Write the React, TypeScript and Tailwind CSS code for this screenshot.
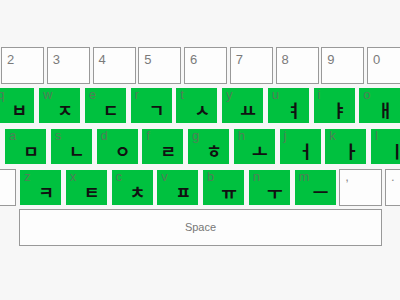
const numberRow = ["1", "2", "3", "4", "5", "6", "7", "8", "9", "0", "-", "="];

const topRow = [
  ["q", "ㅂ"],
  ["w", "ㅈ"],
  ["e", "ㄷ"],
  ["r", "ㄱ"],
  ["t", "ㅅ"],
  ["y", "ㅛ"],
  ["u", "ㅕ"],
  ["i", "ㅑ"],
  ["o", "ㅐ"],
  ["p", "ㅔ"],
];

const homeRow = [
  ["a", "ㅁ"],
  ["s", "ㄴ"],
  ["d", "ㅇ"],
  ["f", "ㄹ"],
  ["g", "ㅎ"],
  ["h", "ㅗ"],
  ["j", "ㅓ"],
  ["k", "ㅏ"],
  ["l", "ㅣ"],
];

const bottomRow = [
  ["z", "ㅋ"],
  ["x", "ㅌ"],
  ["c", "ㅊ"],
  ["v", "ㅍ"],
  ["b", "ㅠ"],
  ["n", "ㅜ"],
  ["m", "ㅡ"],
];

function Cell({ children }: { children: React.ReactNode }) {
  return (
    <div className="w-[45.75px] shrink-0 flex justify-center items-center">
      {children}
    </div>
  );
}

function NumberKey({ label }: { label: string }) {
  return (
    <Cell>
      <div className="w-[43px] h-[37px] border border-[#999] bg-[#fdfdfd] pl-[5px] pt-[5px] text-[13px] leading-none text-[#7a7a7a]">
        {label}
      </div>
    </Cell>
  );
}

function PunctKey({ label }: { label: string }) {
  return (
    <Cell>
      <div className="w-[43px] h-[37px] border border-[#999] bg-[#fdfdfd] pl-[5px] text-[13px] leading-none text-[#8a8a8a]">
        {label}
      </div>
    </Cell>
  );
}

function LetterKey({ letter, jamo }: { letter: string; jamo: string }) {
  return (
    <Cell>
      <div className="w-[41px] h-[35px] bg-[#00c13f] flex flex-col">
        <span className="pl-[4px] text-[13px] leading-none text-[#4f7f57]">
          {letter}
        </span>
        <span className="mt-auto self-end pr-[7px] pb-[5px] text-[17px] leading-none font-semibold text-[#111] font-['Noto_Sans_CJK_KR',sans-serif]">
          {jamo}
        </span>
      </div>
    </Cell>
  );
}

export default function App() {
  return (
    <div className="w-[400px] h-[300px] overflow-hidden bg-[#f7f7f7] pt-[47px] font-['Liberation_Sans',Arial,sans-serif]">
      <div className="flex h-[37px] items-center ml-[-46.125px]">
        {numberRow.map((n) => (
          <NumberKey key={n} label={n} />
        ))}
      </div>

      <div className="flex h-[37px] items-center mt-[3px] ml-[-9.125px]">
        {topRow.map(([l, j]) => (
          <LetterKey key={l} letter={l} jamo={j} />
        ))}
      </div>

      <div className="flex h-[37px] items-center mt-[4px] ml-[2.625px]">
        {homeRow.map(([l, j]) => (
          <LetterKey key={l} letter={l} jamo={j} />
        ))}
      </div>

      <div className="flex h-[37px] items-center mt-[4px] ml-[-28.125px]">
        <PunctKey label="" />
        {bottomRow.map(([l, j]) => (
          <LetterKey key={l} letter={l} jamo={j} />
        ))}
        <PunctKey label="," />
        <PunctKey label="." />
      </div>

      <div className="mt-[3px] ml-[19px] w-[363px] h-[37px] border border-[#999] bg-[#fdfdfd] flex items-center justify-center text-[11px] text-[#777]">
        Space
      </div>
    </div>
  );
}
